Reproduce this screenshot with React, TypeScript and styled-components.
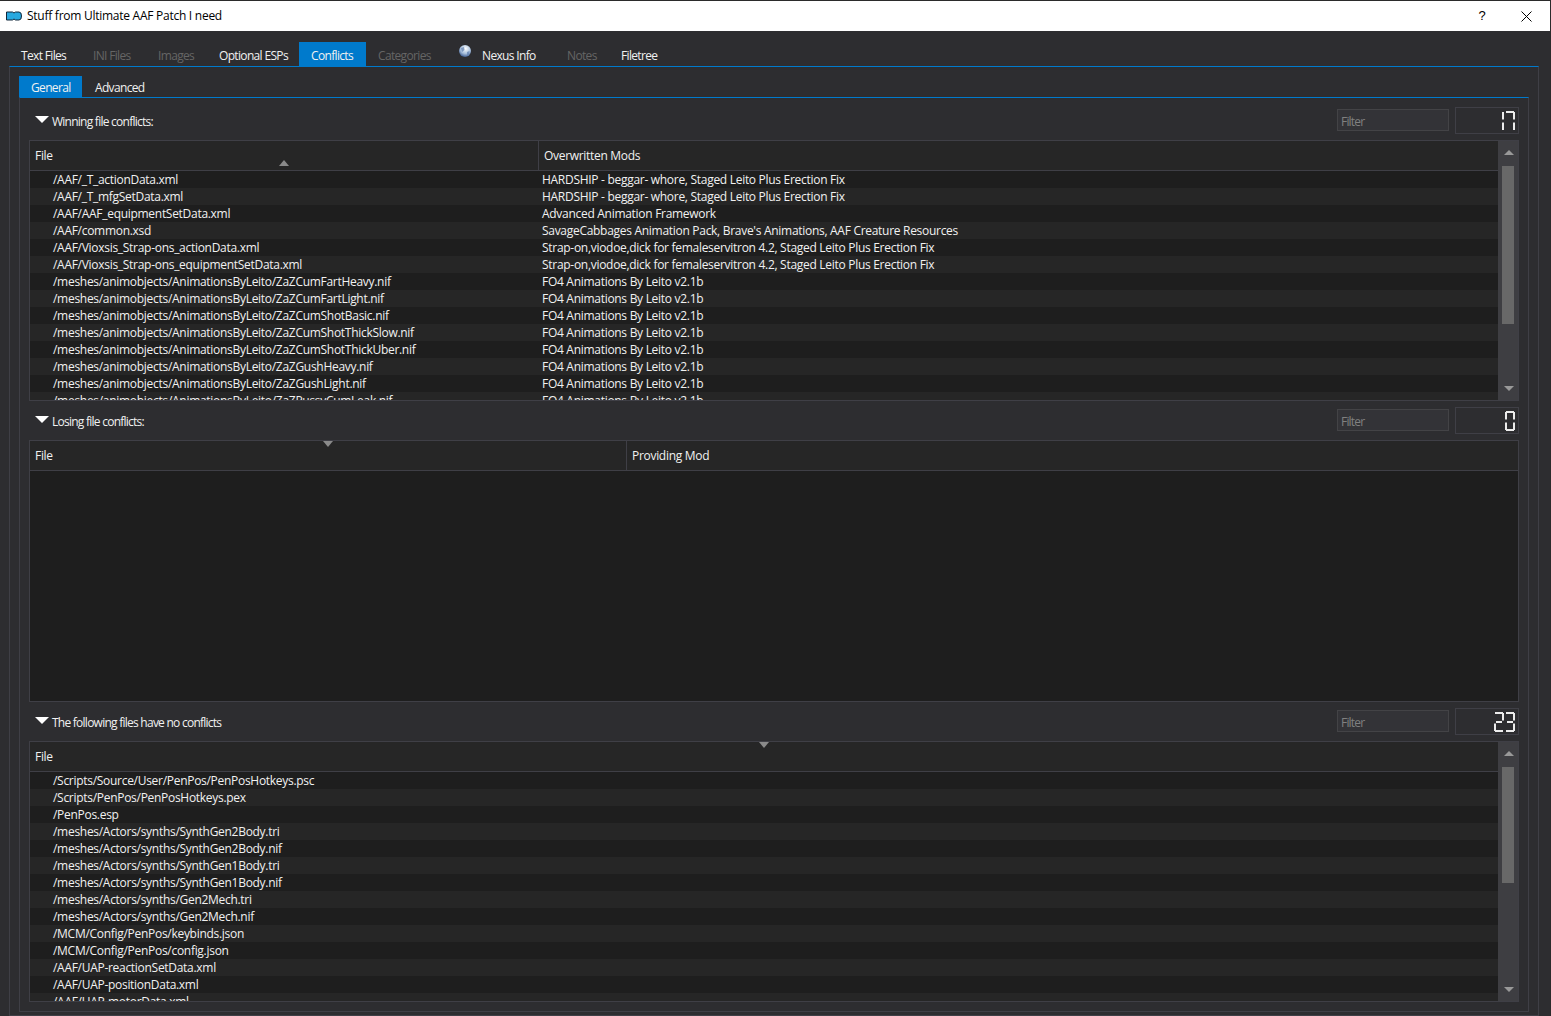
import React from 'react';
import styled, { createGlobalStyle } from 'styled-components';

const Global = createGlobalStyle`
  html, body { margin: 0; padding: 0; background: #2d2d30; }
  * { box-sizing: border-box; }
`;

const FONT = `"Open Sans", "Noto Sans", "Liberation Sans", sans-serif`;

const Page = styled.div`
  width: 1551px;
  height: 1016px;
  overflow: hidden;
  display: flex;
  flex-direction: column;
  background: #2d2d30;
  border-top: 1px solid #2b2b2b;
  border-right: 1px solid #2b2b2b;
  font-family: ${FONT};
  font-size: 12px;
  color: #f1f1f1;
`;

const TitleBar = styled.header`
  height: 30px;
  flex: none;
  display: flex;
  align-items: center;
  background: #ffffff;
  color: #000000;
  padding-left: 6px;
`;

const TitleText = styled.span`
  margin-left: 5px;
  padding-bottom: 2px;
  flex: 1;
  letter-spacing: -0.26px;
  white-space: nowrap;
`;

const HelpMark = styled.span`
  width: 45px;
  padding: 0 0 2px 3px;
  text-align: center;
  font-size: 13px;
  font-family: "Liberation Sans", sans-serif;
`;

const CloseBtn = styled.span`
  width: 47px;
  height: 30px;
  display: flex;
  align-items: center;
  justify-content: center;
`;

const Body = styled.main`
  flex: 1;
  min-height: 0;
  padding: 11px 11px 0 9px;
  display: flex;
  flex-direction: column;
`;

const TabStrip = styled.nav<{ $h: number }>`
  display: flex;
  height: ${p => p.$h}px;
  flex: none;
`;

const Tab = styled.div<{ $w: number; $active?: boolean; $off?: boolean; $pl?: number; $sub?: boolean }>`
  width: ${p => p.$w}px;
  padding-left: ${p => p.$pl ?? 12}px;
  display: flex;
  align-items: center;
  padding-top: ${p => (p.$sub ? 1 : 2)}px;
  white-space: nowrap;
  letter-spacing: -0.66px;
  background: ${p => (p.$active ? '#007acc' : 'transparent')};
  color: ${p => (p.$off ? '#656565' : '#f1f1f1')};
`;

const GlobeIcon = styled.svg`
  width: 14px;
  height: 14px;
  margin: -8px 10px 0 3px;
  flex: none;
`;

const Pane = styled.section`
  flex: 1;
  min-height: 0;
  border: 1px solid #3f3f46;
  border-top-color: #007acc;
  padding: 9px 9px 0;
  display: flex;
  flex-direction: column;
`;

const InnerPane = styled.div`
  border: 1px solid #3f3f46;
  border-top-color: #007acc;
  padding: 9px 9px 9px;
  display: flex;
  flex-direction: column;
  gap: 6px;
`;

const SectionHead = styled.div`
  height: 27px;
  display: flex;
  align-items: center;
  padding-left: 6px;
  margin-bottom: 6px;
`;

const Disclosure = styled.span`
  width: 0;
  height: 0;
  border-left: 7px solid transparent;
  border-right: 7px solid transparent;
  border-top: 7px solid #ffffff;
  margin: -3px 3px 0 0;
`;

const SectionLabel = styled.span`
  flex: 1;
  padding-top: 1px;
  letter-spacing: -0.75px;
  white-space: nowrap;
`;

const FilterInput = styled.input`
  width: 112px;
  height: 22px;
  background: #333337;
  border: 1px solid #434346;
  padding: 2px 3px 0;
  margin: -1px 6px 0 0;
  color: #f1f1f1;
  font-family: ${FONT};
  font-size: 12px;
  letter-spacing: -0.8px;
  outline: none;
  &::placeholder { color: #808080; opacity: 1; }
`;

const Lcd = styled.div`
  width: 64px;
  height: 27px;
  border: 1px solid #3f3f46;
  display: flex;
  justify-content: flex-end;
  align-items: center;
  padding-right: 3px;
  gap: 1px;
`;

const DigitSvg = styled.svg`
  width: 10px;
  height: 20px;
  display: block;
`;

const SEGMENTS: Record<string, string> = {
  '0': 'abcdef',
  '1': 'bc',
  '2': 'abged',
  '3': 'abgcd',
  '7': 'abc',
};

const SEG_RECTS: Record<string, [number, number, number, number]> = {
  a: [1, 0, 8, 2],
  b: [8, 1, 2, 7.5],
  c: [8, 11.5, 2, 7.5],
  d: [1, 18, 8, 2],
  e: [0, 11.5, 2, 7.5],
  f: [0, 1, 2, 7.5],
  g: [2, 9, 6, 2],
};

const LcdDigit = ({ d }: { d: string }) => (
  <DigitSvg viewBox="0 0 10 20">
    {SEGMENTS[d].split('').map(s => {
      const [x, y, w, h] = SEG_RECTS[s];
      return <rect key={s} x={x} y={y} width={w} height={h} fill="#ececec" />;
    })}
  </DigitSvg>
);

const LcdNumber = ({ value }: { value: string }) => (
  <Lcd role="img" aria-label={value}>
    {value.split('').map((d, i) => <LcdDigit key={i} d={d} />)}
  </Lcd>
);

const TableFrame = styled.div<{ $h: number }>`
  height: ${p => p.$h}px;
  border: 1px solid #3f3f46;
  display: flex;
  background: #1e1e1e;
  overflow: hidden;
`;

const TableMain = styled.div`
  flex: 1;
  min-width: 0;
  display: flex;
  flex-direction: column;
`;

const HeaderRow = styled.div<{ $col: number }>`
  position: relative;
  height: 30px;
  flex: none;
  display: grid;
  grid-template-columns: ${p => (p.$col ? `${p.$col}px 1fr` : '1fr')};
  background: #262626;
  border-bottom: 1px solid #3f3f46;
  letter-spacing: -0.3px;
`;

const HeaderCell = styled.div`
  display: flex;
  align-items: center;
  padding-left: 5px;
  & + & { border-left: 1px solid #3f3f46; }
`;

const SortMark = styled.span<{ $x: number; $up?: boolean }>`
  position: absolute;
  left: ${p => p.$x}px;
  top: ${p => (p.$up ? 19 : 0)}px;
  width: 0;
  height: 0;
  border-left: 5px solid transparent;
  border-right: 5px solid transparent;
  ${p => (p.$up ? 'border-bottom: 6px solid #8a8a8a;' : 'border-top: 6px solid #8a8a8a;')}
`;

const Rows = styled.div`
  flex: 1;
  min-height: 0;
  overflow: hidden;
`;

const Row = styled.div<{ $col: number; $alt: boolean }>`
  height: 17px;
  display: grid;
  grid-template-columns: ${p => (p.$col ? `${p.$col}px 1fr` : '1fr')};
  align-items: center;
  background: ${p => (p.$alt ? '#262626' : '#1e1e1e')};
  line-height: 17px;
  white-space: nowrap;
  letter-spacing: -0.29px;
`;

const FileCell = styled.div`
  padding-left: 23px;
`;

const ModCell = styled.div`
  padding-left: 4px;
`;

const ScrollBar = styled.div`
  width: 21px;
  flex: none;
  margin: -1px -1px -1px 0;
  background: #3e3e42;
  display: flex;
  flex-direction: column;
  align-items: flex-start;
`;

const ArrowSlot = styled.div<{ $down?: boolean }>`
  height: 26px;
  flex: none;
  width: 100%;
  display: flex;
  justify-content: center;
  padding-left: 0;
  ${p => (p.$down ? 'align-items: flex-end; padding-bottom: 10px; margin-top: auto;' : 'align-items: flex-start; padding-top: 10px;')}
`;

const ScrollArrow = styled.span<{ $down?: boolean }>`
  width: 0;
  height: 0;
  border-left: 5px solid transparent;
  border-right: 5px solid transparent;
  ${p => (p.$down ? 'border-top: 5px solid #999999;' : 'border-bottom: 5px solid #999999;')}
`;

const Thumb = styled.div<{ $h: number }>`
  width: 12px;
  height: ${p => p.$h}px;
  margin-left: 4px;
  background: #686868;
`;

const Scroller = ({ thumb }: { thumb: number }) => (
  <ScrollBar>
    <ArrowSlot><ScrollArrow /></ArrowSlot>
    <Thumb $h={thumb} />
    <ArrowSlot $down><ScrollArrow $down /></ArrowSlot>
  </ScrollBar>
);

type Props = {
  title: string;
  count: string;
  height: number;
  col: number;
  headers: string[];
  sortX: number;
  sortUp?: boolean;
  rows: [string, string?][];
  thumb?: number;
};

const ConflictSection = ({ title, count, height, col, headers, sortX, sortUp, rows, thumb }: Props) => (
  <div>
    <SectionHead>
      <Disclosure />
      <SectionLabel>{title}</SectionLabel>
      <FilterInput placeholder="Filter" readOnly />
      <LcdNumber value={count} />
    </SectionHead>
    <TableFrame $h={height}>
      <TableMain>
        <HeaderRow $col={col}>
          {headers.map(h => <HeaderCell key={h}>{h}</HeaderCell>)}
          <SortMark $x={sortX} $up={sortUp} />
        </HeaderRow>
        <Rows>
          {rows.map(([f, m], i) => (
            <Row key={f} $col={col} $alt={i % 2 === 1}>
              <FileCell>{f}</FileCell>
              {col ? <ModCell>{m}</ModCell> : null}
            </Row>
          ))}
        </Rows>
      </TableMain>
      {thumb ? <Scroller thumb={thumb} /> : null}
    </TableFrame>
  </div>
);

const LEITO = 'FO4 Animations By Leito v2.1b';
const BASE = '/meshes/animobjects/AnimationsByLeito/';
const HARD = "HARDSHIP - beggar- whore, Staged Leito Plus Erection Fix";
const STRAP = 'Strap-on,viodoe,dick for femaleservitron 4.2, Staged Leito Plus Erection Fix';

const winning: [string, string][] = [
  ['/AAF/_T_actionData.xml', HARD],
  ['/AAF/_T_mfgSetData.xml', HARD],
  ['/AAF/AAF_equipmentSetData.xml', 'Advanced Animation Framework'],
  ['/AAF/common.xsd', "SavageCabbages Animation Pack, Brave's Animations, AAF Creature Resources"],
  ['/AAF/Vioxsis_Strap-ons_actionData.xml', STRAP],
  ['/AAF/Vioxsis_Strap-ons_equipmentSetData.xml', STRAP],
  [BASE + 'ZaZCumFartHeavy.nif', LEITO],
  [BASE + 'ZaZCumFartLight.nif', LEITO],
  [BASE + 'ZaZCumShotBasic.nif', LEITO],
  [BASE + 'ZaZCumShotThickSlow.nif', LEITO],
  [BASE + 'ZaZCumShotThickUber.nif', LEITO],
  [BASE + 'ZaZGushHeavy.nif', LEITO],
  [BASE + 'ZaZGushLight.nif', LEITO],
  [BASE + 'ZaZPussyCumLeak.nif', LEITO],
];

const clean: [string][] = [
  ['/Scripts/Source/User/PenPos/PenPosHotkeys.psc'],
  ['/Scripts/PenPos/PenPosHotkeys.pex'],
  ['/PenPos.esp'],
  ['/meshes/Actors/synths/SynthGen2Body.tri'],
  ['/meshes/Actors/synths/SynthGen2Body.nif'],
  ['/meshes/Actors/synths/SynthGen1Body.tri'],
  ['/meshes/Actors/synths/SynthGen1Body.nif'],
  ['/meshes/Actors/synths/Gen2Mech.tri'],
  ['/meshes/Actors/synths/Gen2Mech.nif'],
  ['/MCM/Config/PenPos/keybinds.json'],
  ['/MCM/Config/PenPos/config.json'],
  ['/AAF/UAP-reactionSetData.xml'],
  ['/AAF/UAP-positionData.xml'],
  ['/AAF/UAP-motorData.xml'],
];

export default function App() {
  return (
    <Page>
      <Global />
      <TitleBar>
        <svg width="16" height="10" viewBox="0 0 16 10">
          <path d="M0.5 1 H6.5 L8 2 L9.5 1 H13 Q15.5 1 15.5 5 Q15.5 9 13 9 H9.5 L8 8 L6.5 9 H0.5 Z" fill="#29a9e0" stroke="#10263a" strokeWidth="1" />
        </svg>
        <TitleText>Stuff from Ultimate AAF Patch I need</TitleText>
        <HelpMark>?</HelpMark>
        <CloseBtn>
          <svg width="11" height="11" viewBox="0 0 11 11">
            <path d="M0.5 0.5 L10.5 10.5 M10.5 0.5 L0.5 10.5" stroke="#000" strokeWidth="1" fill="none" />
          </svg>
        </CloseBtn>
      </TitleBar>
      <Body>
        <TabStrip $h={24}>
          <Tab $w={72}>Text Files</Tab>
          <Tab $w={65} $off>INI Files</Tab>
          <Tab $w={61} $off>Images</Tab>
          <Tab $w={92}>Optional ESPs</Tab>
          <Tab $w={67} $active>Conflicts</Tab>
          <Tab $w={77} $off>Categories</Tab>
          <Tab $w={112}>
            <GlobeIcon viewBox="0 0 14 14">
              <defs>
                <radialGradient id="globe" cx="55%" cy="30%" r="75%">
                  <stop offset="0" stopColor="#ffffff" />
                  <stop offset="0.55" stopColor="#a9c0dc" />
                  <stop offset="1" stopColor="#2f4f86" />
                </radialGradient>
              </defs>
              <circle cx="7" cy="7" r="6" fill="url(#globe)" />
              <path d="M3 4 L6 3 L6.5 6 L4 8 Z M9 8 L11.5 7 L11 10.5 L9 11 Z" fill="#5f7fae" opacity="0.7" />
            </GlobeIcon>
            Nexus Info
          </Tab>
          <Tab $w={54} $off>Notes</Tab>
          <Tab $w={61}>Filetree</Tab>
        </TabStrip>
        <Pane>
          <TabStrip $h={21}>
            <Tab $w={63} $active $sub>General</Tab>
            <Tab $w={73} $sub $pl={13}>Advanced</Tab>
          </TabStrip>
          <InnerPane>
            <ConflictSection
              title="Winning file conflicts:"
              count="17"
              height={261}
              col={508}
              headers={['File', 'Overwritten Mods']}
              sortX={249}
              sortUp
              rows={winning}
              thumb={158}
            />
            <ConflictSection
              title="Losing file conflicts:"
              count="0"
              height={262}
              col={596}
              headers={['File', 'Providing Mod']}
              sortX={293}
              rows={[]}
            />
            <ConflictSection
              title="The following files have no conflicts"
              count="23"
              height={261}
              col={0}
              headers={['File']}
              sortX={729}
              rows={clean}
              thumb={116}
            />
          </InnerPane>
        </Pane>
      </Body>
    </Page>
  );
}
